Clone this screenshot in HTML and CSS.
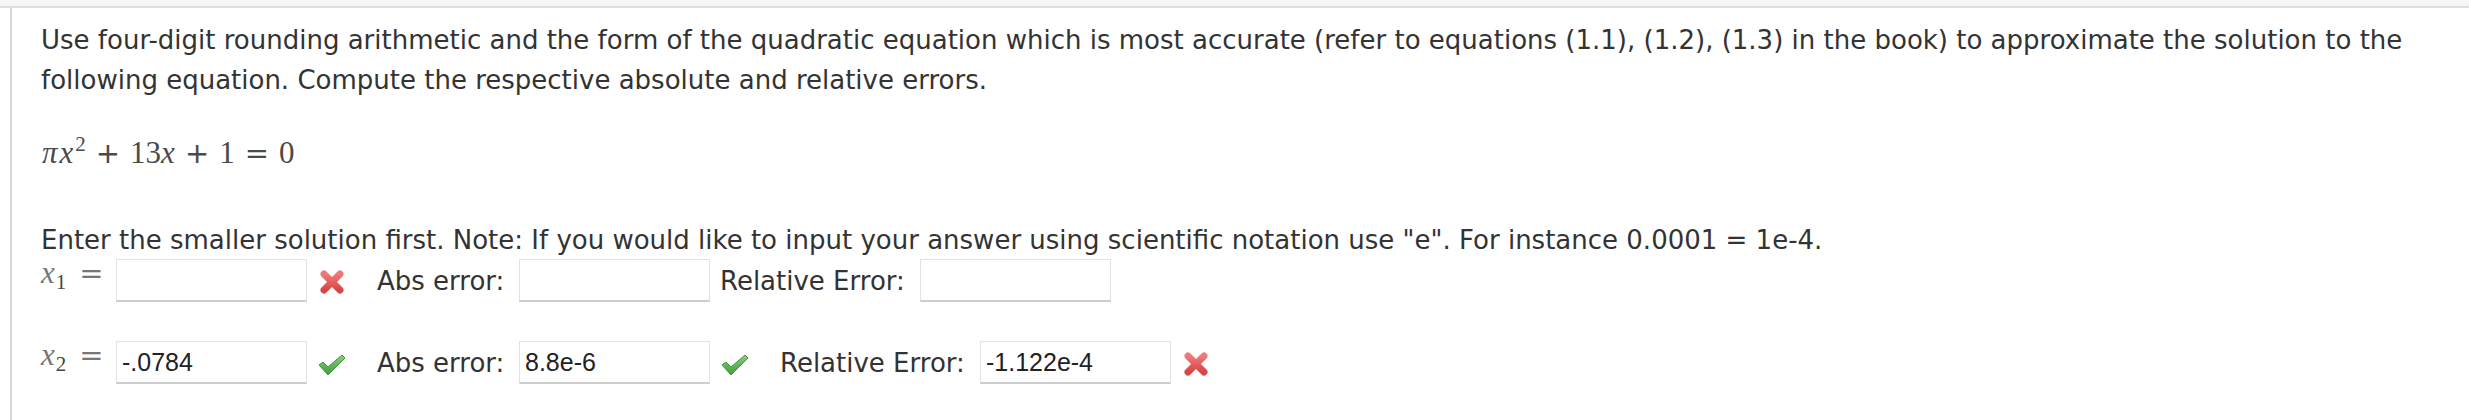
FILE: index.html
```html
<!DOCTYPE html>
<html lang="en">
<head>
    <meta charset="UTF-8">
    <meta name="viewport" content="width=device-width, initial-scale=1.0">
    <title>Quadratic rounding</title>
    <link rel="stylesheet" href="styles.css">
</head>
<body>
    <div class="page-top"></div>
    <div class="problem">
        <p class="intro">Use four-digit rounding arithmetic and the form of the quadratic equation which is most accurate (refer to equations (1.1), (1.2), (1.3) in the book) to approximate the solution to the following equation. Compute the respective absolute and relative errors.</p>

        <p class="equation"><span class="math"><span class="mi">π</span><span class="mi">x</span><sup>2</sup><span class="mo">+</span>13<span class="mi">x</span><span class="mo">+</span>1<span class="mo">=</span>0</span></p>

        <p class="note">Enter the smaller solution first. Note: If you would like to input your answer using scientific notation use "e". For instance 0.0001 = 1e-4.</p>

        <div class="answer-row">
            <span class="math row-label"><span class="mi">x</span><sub>1</sub><span class="mo">=</span></span>
            <input class="answer" type="text" value="">
            <span class="mark wrong">
                <svg viewBox="0 0 30 26" width="30" height="26">
                    <defs>
                        <linearGradient id="redFill1" x1="0" y1="0" x2="0" y2="1">
                            <stop offset="0" stop-color="#ef7a7a"/>
                            <stop offset="1" stop-color="#d94545"/>
                        </linearGradient>
                    </defs>
                    <path d="M7 5 L23 21 M23 5 L7 21" stroke="url(#redFill1)" stroke-width="7" stroke-linecap="round"/>
                </svg>
            </span>
            <span class="field-label abs">Abs error:</span>
            <input class="answer" type="text" value="">
            <span class="field-label rel spaced">Relative Error:</span>
            <input class="answer" type="text" value="">
        </div>

        <div class="answer-row second">
            <span class="math row-label"><span class="mi">x</span><sub>2</sub><span class="mo">=</span></span>
            <input class="answer" type="text" value="-.0784">
            <span class="mark right">
                <svg viewBox="0 0 30 26" width="30" height="26">
                    <defs>
                        <linearGradient id="greenFill1" x1="0" y1="0" x2="0" y2="1">
                            <stop offset="0" stop-color="#8ccf7e"/>
                            <stop offset="1" stop-color="#3f9a3a"/>
                        </linearGradient>
                    </defs>
                    <path d="M2 14 L6 11 L11 16 L25 4 L28 7 L11 24 Z" fill="url(#greenFill1)" stroke="#3f9a3a" stroke-width="1" stroke-linejoin="round"/>
                </svg>
            </span>
            <span class="field-label abs">Abs error:</span>
            <input class="answer" type="text" value="8.8e-6">
            <span class="mark right">
                <svg viewBox="0 0 30 26" width="30" height="26">
                    <defs>
                        <linearGradient id="greenFill2" x1="0" y1="0" x2="0" y2="1">
                            <stop offset="0" stop-color="#8ccf7e"/>
                            <stop offset="1" stop-color="#3f9a3a"/>
                        </linearGradient>
                    </defs>
                    <path d="M2 14 L6 11 L11 16 L25 4 L28 7 L11 24 Z" fill="url(#greenFill2)" stroke="#3f9a3a" stroke-width="1" stroke-linejoin="round"/>
                </svg>
            </span>
            <span class="field-label rel">Relative Error:</span>
            <input class="answer" type="text" value="-1.122e-4">
            <span class="mark wrong">
                <svg viewBox="0 0 30 26" width="30" height="26">
                    <defs>
                        <linearGradient id="redFill2" x1="0" y1="0" x2="0" y2="1">
                            <stop offset="0" stop-color="#ef7a7a"/>
                            <stop offset="1" stop-color="#d94545"/>
                        </linearGradient>
                    </defs>
                    <path d="M7 5 L23 21 M23 5 L7 21" stroke="url(#redFill2)" stroke-width="7" stroke-linecap="round"/>
                </svg>
            </span>
        </div>
    </div>
</body>
</html>
```

FILE: styles.css
```css
body{
    margin: 0;
    background: #fff;
    color: #333;
    font-family: 'DejaVu Sans', Verdana, sans-serif;
    font-size: 26px;
}
.page-top{
    height: 6px;
    background: #f6f6f6;
    border-bottom: 2px solid #dedede;
}
.problem{
    margin-left: 10px;
    border-left: 2px solid #d6d6d6;
    padding: 12px 20px 40px 29px;
}
.intro{
    margin: 0;
    line-height: 40px;
}
.math{
    font-family: 'Liberation Serif', 'DejaVu Serif', serif;
    color: #4a4a4a;
    font-size: 31px;
}
.mi{
    font-style: italic;
}
.mi + .mi{
    margin-left: 2px;
}
.mo{
    margin: 0 10px;
    font-family: 'DejaVu Sans', sans-serif;
    font-size: 29px;
}
.math sup{
    font-size: 21px;
    vertical-align: 12px;
    line-height: 0;
    margin-left: 2px;
}
.math sub{
    font-size: 21px;
    vertical-align: -6px;
    line-height: 0;
    margin-left: 1px;
}
.equation{
    margin: 33px 0 0 1px;
    line-height: 40px;
}
.note{
    margin: 47px 0 0 0;
    line-height: 38px;
}
.answer-row{
    display: flex;
    align-items: center;
    height: 43px;
}
.answer-row.second{
    margin-top: 39px;
}
.row-label{
    width: 75px;
    flex: none;
    line-height: 31px;
    margin-bottom: 16px;
    color: #777;
}
.row-label sub{
    color: #444;
}
.row-label .mo{
    margin: 0 0 0 13px;
}
.answer{
    flex: none;
    box-sizing: border-box;
    width: 191px;
    height: 43px;
    margin: 0;
    padding: 0 5px;
    border: 1px solid #e2e2e2;
    border-bottom: 2px solid #cdcdcd;
    background: #fff;
    font-family: 'Liberation Sans', Arial, sans-serif;
    font-size: 25px;
    color: #222;
    outline: none;
}
.mark{
    flex: none;
    display: flex;
    width: 30px;
    margin: 2px 30px 0 10px;
}
.answer-row .mark:last-child{
    margin-right: 0;
}
.field-label{
    flex: none;
    line-height: 40px;
    white-space: nowrap;
}
.abs{
    width: 142px;
}
.rel{
    width: 200px;
}
.spaced{
    margin-left: 10px;
}
```
